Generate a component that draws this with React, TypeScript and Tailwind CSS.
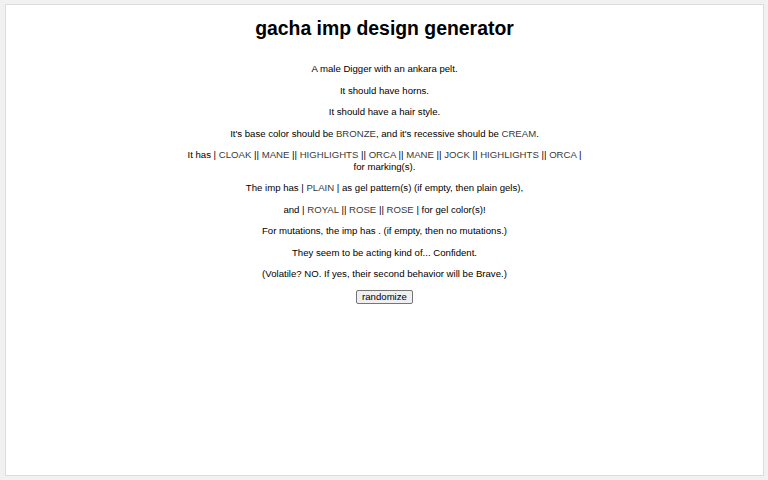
import { useState } from "react";

const val = "text-[#3a3a3a]";

export default function App() {
  const [n, setN] = useState(0);

  return (
    <div className="h-[480px] bg-[#f1f1f1] pt-[4px] pb-[4px] pl-[5px] pr-[4px] font-['Liberation_Sans',Arial,sans-serif] text-black">
      <div key={n} className="h-full border border-[#dcdcdc] bg-white pt-[12px]">
        <h1 className="text-center text-[19.4px] font-bold leading-[23px]">gacha imp design generator</h1>

        <div className="mx-auto mt-[23px] w-[400px] text-center text-[9.6px] leading-[11.5px] [&>p]:mb-[10px]">
          <p>A male Digger with an ankara pelt.</p>
          <p>It should have horns.</p>
          <p>It should have a hair style.</p>
          <p>
            It's base color should be <span className={val}>BRONZE</span>, and it's recessive should be{" "}
            <span className={val}>CREAM</span>.
          </p>
          <p>
            It has | <span className={val}>CLOAK</span> || <span className={val}>MANE</span> ||{" "}
            <span className={val}>HIGHLIGHTS</span> || <span className={val}>ORCA</span> ||{" "}
            <span className={val}>MANE</span> || <span className={val}>JOCK</span> ||{" "}
            <span className={val}>HIGHLIGHTS</span> || <span className={val}>ORCA</span> | for marking(s).
          </p>
          <p>
            The imp has | <span className={val}>PLAIN</span> | as gel pattern(s) (if empty, then plain gels),
          </p>
          <p>
            and | <span className={val}>ROYAL</span> || <span className={val}>ROSE</span> ||{" "}
            <span className={val}>ROSE</span> | for gel color(s)!
          </p>
          <p>For mutations, the imp has . (if empty, then no mutations.)</p>
          <p>They seem to be acting kind of... Confident.</p>
          <p>(Volatile? NO. If yes, their second behavior will be Brave.)</p>
          <button
            onClick={() => setN(n + 1)}
            className="rounded-[2px] border border-[#767676] bg-[#efefef] px-[5px] py-0 text-[9.6px] leading-[12px]"
          >
            randomize
          </button>
        </div>
      </div>
    </div>
  );
}
